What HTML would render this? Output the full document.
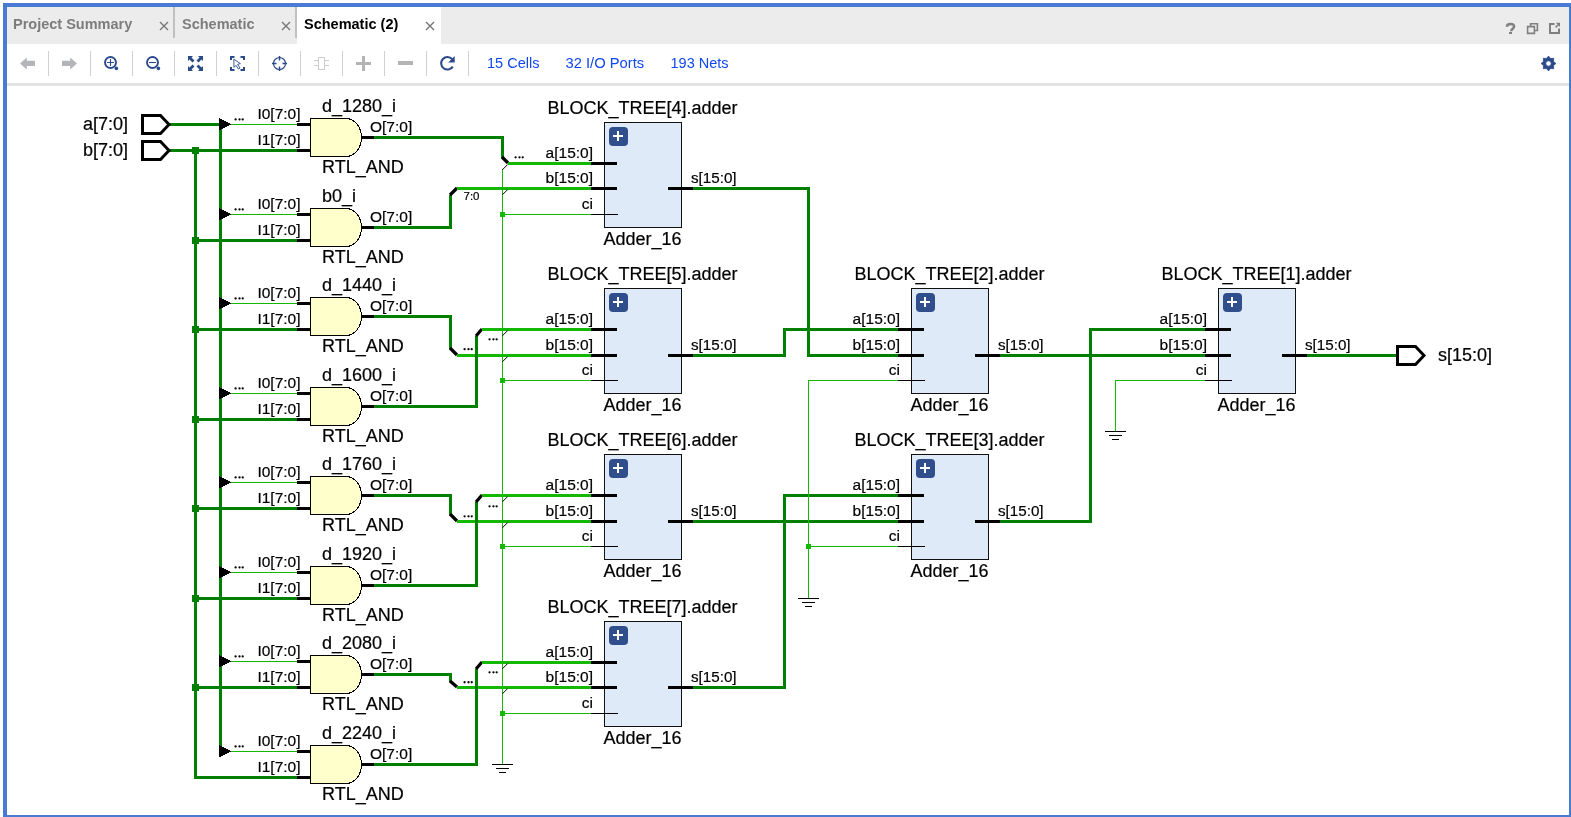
<!DOCTYPE html>
<html><head><meta charset="utf-8"><title>Schematic</title>
<style>
html,body{margin:0;padding:0;background:#fff;}
body{width:1571px;height:817px;overflow:hidden;position:relative;}
svg{position:absolute;left:0;top:0;will-change:transform;}
text{font-family:"Liberation Sans",sans-serif;} .sch text{stroke:#000;stroke-width:0.2px;}
</style></head><body>
<svg width="1571" height="817" viewBox="0 0 1571 817">
<rect x="0" y="0" width="1571" height="817" fill="#fff"/>
<g class="sch" shape-rendering="crispEdges">
<rect x="170" y="123" width="50" height="3" fill="#008000"/>
<rect x="170" y="149" width="128" height="3" fill="#008000"/>
<rect x="219" y="124" width="3" height="628" fill="#008000"/>
<rect x="194" y="150" width="3" height="629" fill="#008000"/>
<rect x="192" y="147" width="7" height="7" fill="#008000"/>
<rect x="231" y="124" width="67" height="1" fill="#14b800"/>
<polygon points="219,118 231.5,124.5 219,130.3" fill="#000"/>
<rect x="297" y="123" width="13" height="3" fill="#000"/>
<rect x="297" y="149" width="13" height="3" fill="#000"/>
<rect x="362" y="136" width="12" height="3" fill="#000"/>
<path d="M310.5,118.5 H346 A15.5,19 0 0 1 346,156.5 H310.5 Z" fill="#ffffcc" stroke="#000" stroke-width="1"/>
<text x="300.5" y="119" font-size="15.5" text-anchor="end" fill="#000" font-weight="normal" >I0[7:0]</text>
<text x="300.5" y="145" font-size="15.5" text-anchor="end" fill="#000" font-weight="normal" >I1[7:0]</text>
<text x="322" y="112" font-size="18" text-anchor="start" fill="#000" font-weight="normal" >d_1280_i</text>
<text x="322" y="173" font-size="18" text-anchor="start" fill="#000" font-weight="normal" >RTL_AND</text>
<text x="370" y="132" font-size="15.5" text-anchor="start" fill="#000" font-weight="normal" >O[7:0]</text>
<rect x="194" y="239" width="104" height="3" fill="#008000"/>
<rect x="192" y="237" width="7" height="7" fill="#008000"/>
<rect x="231" y="214" width="67" height="1" fill="#14b800"/>
<polygon points="219,208 231.5,214.5 219,220.3" fill="#000"/>
<rect x="297" y="213" width="13" height="3" fill="#000"/>
<rect x="297" y="239" width="13" height="3" fill="#000"/>
<rect x="362" y="226" width="12" height="3" fill="#000"/>
<path d="M310.5,208.5 H346 A15.5,19 0 0 1 346,246.5 H310.5 Z" fill="#ffffcc" stroke="#000" stroke-width="1"/>
<text x="300.5" y="209" font-size="15.5" text-anchor="end" fill="#000" font-weight="normal" >I0[7:0]</text>
<text x="300.5" y="235" font-size="15.5" text-anchor="end" fill="#000" font-weight="normal" >I1[7:0]</text>
<text x="322" y="202" font-size="18" text-anchor="start" fill="#000" font-weight="normal" >b0_i</text>
<text x="322" y="263" font-size="18" text-anchor="start" fill="#000" font-weight="normal" >RTL_AND</text>
<text x="370" y="222" font-size="15.5" text-anchor="start" fill="#000" font-weight="normal" >O[7:0]</text>
<rect x="194" y="328" width="104" height="3" fill="#008000"/>
<rect x="192" y="326" width="7" height="7" fill="#008000"/>
<rect x="231" y="303" width="67" height="1" fill="#14b800"/>
<polygon points="219,297 231.5,303.5 219,309.3" fill="#000"/>
<rect x="297" y="302" width="13" height="3" fill="#000"/>
<rect x="297" y="328" width="13" height="3" fill="#000"/>
<rect x="362" y="315" width="12" height="3" fill="#000"/>
<path d="M310.5,297.5 H346 A15.5,19 0 0 1 346,335.5 H310.5 Z" fill="#ffffcc" stroke="#000" stroke-width="1"/>
<text x="300.5" y="298" font-size="15.5" text-anchor="end" fill="#000" font-weight="normal" >I0[7:0]</text>
<text x="300.5" y="324" font-size="15.5" text-anchor="end" fill="#000" font-weight="normal" >I1[7:0]</text>
<text x="322" y="291" font-size="18" text-anchor="start" fill="#000" font-weight="normal" >d_1440_i</text>
<text x="322" y="352" font-size="18" text-anchor="start" fill="#000" font-weight="normal" >RTL_AND</text>
<text x="370" y="311" font-size="15.5" text-anchor="start" fill="#000" font-weight="normal" >O[7:0]</text>
<rect x="194" y="418" width="104" height="3" fill="#008000"/>
<rect x="192" y="416" width="7" height="7" fill="#008000"/>
<rect x="231" y="393" width="67" height="1" fill="#14b800"/>
<polygon points="219,387 231.5,393.5 219,399.3" fill="#000"/>
<rect x="297" y="392" width="13" height="3" fill="#000"/>
<rect x="297" y="418" width="13" height="3" fill="#000"/>
<rect x="362" y="405" width="12" height="3" fill="#000"/>
<path d="M310.5,387.5 H346 A15.5,19 0 0 1 346,425.5 H310.5 Z" fill="#ffffcc" stroke="#000" stroke-width="1"/>
<text x="300.5" y="388" font-size="15.5" text-anchor="end" fill="#000" font-weight="normal" >I0[7:0]</text>
<text x="300.5" y="414" font-size="15.5" text-anchor="end" fill="#000" font-weight="normal" >I1[7:0]</text>
<text x="322" y="381" font-size="18" text-anchor="start" fill="#000" font-weight="normal" >d_1600_i</text>
<text x="322" y="442" font-size="18" text-anchor="start" fill="#000" font-weight="normal" >RTL_AND</text>
<text x="370" y="401" font-size="15.5" text-anchor="start" fill="#000" font-weight="normal" >O[7:0]</text>
<rect x="194" y="507" width="104" height="3" fill="#008000"/>
<rect x="192" y="505" width="7" height="7" fill="#008000"/>
<rect x="231" y="482" width="67" height="1" fill="#14b800"/>
<polygon points="219,476 231.5,482.5 219,488.3" fill="#000"/>
<rect x="297" y="481" width="13" height="3" fill="#000"/>
<rect x="297" y="507" width="13" height="3" fill="#000"/>
<rect x="362" y="494" width="12" height="3" fill="#000"/>
<path d="M310.5,476.5 H346 A15.5,19 0 0 1 346,514.5 H310.5 Z" fill="#ffffcc" stroke="#000" stroke-width="1"/>
<text x="300.5" y="477" font-size="15.5" text-anchor="end" fill="#000" font-weight="normal" >I0[7:0]</text>
<text x="300.5" y="503" font-size="15.5" text-anchor="end" fill="#000" font-weight="normal" >I1[7:0]</text>
<text x="322" y="470" font-size="18" text-anchor="start" fill="#000" font-weight="normal" >d_1760_i</text>
<text x="322" y="531" font-size="18" text-anchor="start" fill="#000" font-weight="normal" >RTL_AND</text>
<text x="370" y="490" font-size="15.5" text-anchor="start" fill="#000" font-weight="normal" >O[7:0]</text>
<rect x="194" y="597" width="104" height="3" fill="#008000"/>
<rect x="192" y="595" width="7" height="7" fill="#008000"/>
<rect x="231" y="572" width="67" height="1" fill="#14b800"/>
<polygon points="219,566 231.5,572.5 219,578.3" fill="#000"/>
<rect x="297" y="571" width="13" height="3" fill="#000"/>
<rect x="297" y="597" width="13" height="3" fill="#000"/>
<rect x="362" y="584" width="12" height="3" fill="#000"/>
<path d="M310.5,566.5 H346 A15.5,19 0 0 1 346,604.5 H310.5 Z" fill="#ffffcc" stroke="#000" stroke-width="1"/>
<text x="300.5" y="567" font-size="15.5" text-anchor="end" fill="#000" font-weight="normal" >I0[7:0]</text>
<text x="300.5" y="593" font-size="15.5" text-anchor="end" fill="#000" font-weight="normal" >I1[7:0]</text>
<text x="322" y="560" font-size="18" text-anchor="start" fill="#000" font-weight="normal" >d_1920_i</text>
<text x="322" y="621" font-size="18" text-anchor="start" fill="#000" font-weight="normal" >RTL_AND</text>
<text x="370" y="580" font-size="15.5" text-anchor="start" fill="#000" font-weight="normal" >O[7:0]</text>
<rect x="194" y="686" width="104" height="3" fill="#008000"/>
<rect x="192" y="684" width="7" height="7" fill="#008000"/>
<rect x="231" y="661" width="67" height="1" fill="#14b800"/>
<polygon points="219,655 231.5,661.5 219,667.3" fill="#000"/>
<rect x="297" y="660" width="13" height="3" fill="#000"/>
<rect x="297" y="686" width="13" height="3" fill="#000"/>
<rect x="362" y="673" width="12" height="3" fill="#000"/>
<path d="M310.5,655.5 H346 A15.5,19 0 0 1 346,693.5 H310.5 Z" fill="#ffffcc" stroke="#000" stroke-width="1"/>
<text x="300.5" y="656" font-size="15.5" text-anchor="end" fill="#000" font-weight="normal" >I0[7:0]</text>
<text x="300.5" y="682" font-size="15.5" text-anchor="end" fill="#000" font-weight="normal" >I1[7:0]</text>
<text x="322" y="649" font-size="18" text-anchor="start" fill="#000" font-weight="normal" >d_2080_i</text>
<text x="322" y="710" font-size="18" text-anchor="start" fill="#000" font-weight="normal" >RTL_AND</text>
<text x="370" y="669" font-size="15.5" text-anchor="start" fill="#000" font-weight="normal" >O[7:0]</text>
<rect x="194" y="776" width="104" height="3" fill="#008000"/>
<rect x="231" y="751" width="67" height="1" fill="#14b800"/>
<polygon points="219,745 231.5,751.5 219,757.3" fill="#000"/>
<rect x="297" y="750" width="13" height="3" fill="#000"/>
<rect x="297" y="776" width="13" height="3" fill="#000"/>
<rect x="362" y="763" width="12" height="3" fill="#000"/>
<path d="M310.5,745.5 H346 A15.5,19 0 0 1 346,783.5 H310.5 Z" fill="#ffffcc" stroke="#000" stroke-width="1"/>
<text x="300.5" y="746" font-size="15.5" text-anchor="end" fill="#000" font-weight="normal" >I0[7:0]</text>
<text x="300.5" y="772" font-size="15.5" text-anchor="end" fill="#000" font-weight="normal" >I1[7:0]</text>
<text x="322" y="739" font-size="18" text-anchor="start" fill="#000" font-weight="normal" >d_2240_i</text>
<text x="322" y="800" font-size="18" text-anchor="start" fill="#000" font-weight="normal" >RTL_AND</text>
<text x="370" y="759" font-size="15.5" text-anchor="start" fill="#000" font-weight="normal" >O[7:0]</text>
<polygon points="142.5,115.5 160.5,115.5 169,124.5 160.5,133.5 142.5,133.5" fill="#fff" stroke="#000" stroke-width="3" stroke-linejoin="miter" shape-rendering="geometricPrecision"/>
<polygon points="142.5,141.5 160.5,141.5 169,150.5 160.5,159.5 142.5,159.5" fill="#fff" stroke="#000" stroke-width="3" stroke-linejoin="miter" shape-rendering="geometricPrecision"/>
<text x="128" y="130" font-size="18" text-anchor="end" fill="#000" font-weight="normal" >a[7:0]</text>
<text x="128" y="156" font-size="18" text-anchor="end" fill="#000" font-weight="normal" >b[7:0]</text>
<rect x="374" y="136" width="130" height="3" fill="#008000"/>
<rect x="501" y="136" width="3" height="22" fill="#008000"/>
<line x1="502" y1="157" x2="508" y2="163" stroke="#000" stroke-width="3.2" stroke-linecap="butt" shape-rendering="geometricPrecision"/>
<rect x="508" y="162" width="84" height="3" fill="#14b800"/>
<rect x="374" y="226" width="78" height="3" fill="#008000"/>
<rect x="449" y="195" width="3" height="34" fill="#008000"/>
<line x1="450" y1="195" x2="457" y2="188" stroke="#000" stroke-width="3.2" stroke-linecap="butt" shape-rendering="geometricPrecision"/>
<rect x="457" y="187" width="135" height="3" fill="#14b800"/>
<rect x="374" y="315" width="78" height="3" fill="#008000"/>
<rect x="449" y="315" width="3" height="34" fill="#008000"/>
<line x1="450" y1="348" x2="457" y2="355" stroke="#000" stroke-width="3.2" stroke-linecap="butt" shape-rendering="geometricPrecision"/>
<rect x="457" y="354" width="135" height="3" fill="#14b800"/>
<rect x="374" y="405" width="104" height="3" fill="#008000"/>
<rect x="475" y="336" width="3" height="72" fill="#008000"/>
<line x1="476" y1="336" x2="482" y2="329" stroke="#000" stroke-width="3.2" stroke-linecap="butt" shape-rendering="geometricPrecision"/>
<rect x="482" y="328" width="110" height="3" fill="#14b800"/>
<rect x="374" y="494" width="78" height="3" fill="#008000"/>
<rect x="449" y="494" width="3" height="21" fill="#008000"/>
<line x1="450" y1="514" x2="457" y2="521" stroke="#000" stroke-width="3.2" stroke-linecap="butt" shape-rendering="geometricPrecision"/>
<rect x="457" y="520" width="135" height="3" fill="#14b800"/>
<rect x="374" y="584" width="104" height="3" fill="#008000"/>
<rect x="475" y="502" width="3" height="85" fill="#008000"/>
<line x1="476" y1="502" x2="482" y2="495" stroke="#000" stroke-width="3.2" stroke-linecap="butt" shape-rendering="geometricPrecision"/>
<rect x="482" y="494" width="110" height="3" fill="#14b800"/>
<rect x="374" y="673" width="78" height="3" fill="#008000"/>
<rect x="449" y="673" width="3" height="9" fill="#008000"/>
<line x1="450" y1="681" x2="457" y2="687" stroke="#000" stroke-width="3.2" stroke-linecap="butt" shape-rendering="geometricPrecision"/>
<rect x="457" y="686" width="135" height="3" fill="#14b800"/>
<rect x="374" y="763" width="104" height="3" fill="#008000"/>
<rect x="475" y="669" width="3" height="97" fill="#008000"/>
<line x1="476" y1="669" x2="482" y2="662" stroke="#000" stroke-width="3.2" stroke-linecap="butt" shape-rendering="geometricPrecision"/>
<rect x="482" y="661" width="110" height="3" fill="#14b800"/>
<text x="463.5" y="199.5" font-size="11.5" text-anchor="start" fill="#000" font-weight="normal" >7:0</text>
<circle cx="235.6" cy="119.4" r="1.15" fill="#000" shape-rendering="geometricPrecision"/>
<circle cx="239.5" cy="119.4" r="1.15" fill="#000" shape-rendering="geometricPrecision"/>
<circle cx="242.7" cy="119.4" r="1.15" fill="#000" shape-rendering="geometricPrecision"/>
<circle cx="235.6" cy="209.4" r="1.15" fill="#000" shape-rendering="geometricPrecision"/>
<circle cx="239.5" cy="209.4" r="1.15" fill="#000" shape-rendering="geometricPrecision"/>
<circle cx="242.7" cy="209.4" r="1.15" fill="#000" shape-rendering="geometricPrecision"/>
<circle cx="235.6" cy="298.4" r="1.15" fill="#000" shape-rendering="geometricPrecision"/>
<circle cx="239.5" cy="298.4" r="1.15" fill="#000" shape-rendering="geometricPrecision"/>
<circle cx="242.7" cy="298.4" r="1.15" fill="#000" shape-rendering="geometricPrecision"/>
<circle cx="235.6" cy="388.4" r="1.15" fill="#000" shape-rendering="geometricPrecision"/>
<circle cx="239.5" cy="388.4" r="1.15" fill="#000" shape-rendering="geometricPrecision"/>
<circle cx="242.7" cy="388.4" r="1.15" fill="#000" shape-rendering="geometricPrecision"/>
<circle cx="235.6" cy="477.4" r="1.15" fill="#000" shape-rendering="geometricPrecision"/>
<circle cx="239.5" cy="477.4" r="1.15" fill="#000" shape-rendering="geometricPrecision"/>
<circle cx="242.7" cy="477.4" r="1.15" fill="#000" shape-rendering="geometricPrecision"/>
<circle cx="235.6" cy="567.4" r="1.15" fill="#000" shape-rendering="geometricPrecision"/>
<circle cx="239.5" cy="567.4" r="1.15" fill="#000" shape-rendering="geometricPrecision"/>
<circle cx="242.7" cy="567.4" r="1.15" fill="#000" shape-rendering="geometricPrecision"/>
<circle cx="235.6" cy="656.4" r="1.15" fill="#000" shape-rendering="geometricPrecision"/>
<circle cx="239.5" cy="656.4" r="1.15" fill="#000" shape-rendering="geometricPrecision"/>
<circle cx="242.7" cy="656.4" r="1.15" fill="#000" shape-rendering="geometricPrecision"/>
<circle cx="235.6" cy="746.4" r="1.15" fill="#000" shape-rendering="geometricPrecision"/>
<circle cx="239.5" cy="746.4" r="1.15" fill="#000" shape-rendering="geometricPrecision"/>
<circle cx="242.7" cy="746.4" r="1.15" fill="#000" shape-rendering="geometricPrecision"/>
<circle cx="515.6" cy="157.3" r="1.15" fill="#000" shape-rendering="geometricPrecision"/>
<circle cx="519.5" cy="157.3" r="1.15" fill="#000" shape-rendering="geometricPrecision"/>
<circle cx="522.7" cy="157.3" r="1.15" fill="#000" shape-rendering="geometricPrecision"/>
<circle cx="489.55" cy="339.3" r="1.15" fill="#000" shape-rendering="geometricPrecision"/>
<circle cx="493.45" cy="339.3" r="1.15" fill="#000" shape-rendering="geometricPrecision"/>
<circle cx="496.65000000000003" cy="339.3" r="1.15" fill="#000" shape-rendering="geometricPrecision"/>
<circle cx="464.6" cy="349.2" r="1.15" fill="#000" shape-rendering="geometricPrecision"/>
<circle cx="468.5" cy="349.2" r="1.15" fill="#000" shape-rendering="geometricPrecision"/>
<circle cx="471.70000000000005" cy="349.2" r="1.15" fill="#000" shape-rendering="geometricPrecision"/>
<circle cx="489.55" cy="506.3" r="1.15" fill="#000" shape-rendering="geometricPrecision"/>
<circle cx="493.45" cy="506.3" r="1.15" fill="#000" shape-rendering="geometricPrecision"/>
<circle cx="496.65000000000003" cy="506.3" r="1.15" fill="#000" shape-rendering="geometricPrecision"/>
<circle cx="464.6" cy="516.3" r="1.15" fill="#000" shape-rendering="geometricPrecision"/>
<circle cx="468.5" cy="516.3" r="1.15" fill="#000" shape-rendering="geometricPrecision"/>
<circle cx="471.70000000000005" cy="516.3" r="1.15" fill="#000" shape-rendering="geometricPrecision"/>
<circle cx="489.55" cy="672.3" r="1.15" fill="#000" shape-rendering="geometricPrecision"/>
<circle cx="493.45" cy="672.3" r="1.15" fill="#000" shape-rendering="geometricPrecision"/>
<circle cx="496.65000000000003" cy="672.3" r="1.15" fill="#000" shape-rendering="geometricPrecision"/>
<circle cx="464.6" cy="682.25" r="1.15" fill="#000" shape-rendering="geometricPrecision"/>
<circle cx="468.5" cy="682.25" r="1.15" fill="#000" shape-rendering="geometricPrecision"/>
<circle cx="471.70000000000005" cy="682.25" r="1.15" fill="#000" shape-rendering="geometricPrecision"/>
<rect x="502" y="169" width="1" height="596" fill="#14b800"/>
<rect x="500" y="212" width="5" height="5" fill="#14b800"/>
<rect x="502" y="214" width="90" height="1" fill="#14b800"/>
<rect x="500" y="378" width="5" height="5" fill="#14b800"/>
<rect x="502" y="380" width="90" height="1" fill="#14b800"/>
<rect x="500" y="544" width="5" height="5" fill="#14b800"/>
<rect x="502" y="546" width="90" height="1" fill="#14b800"/>
<rect x="500" y="711" width="5" height="5" fill="#14b800"/>
<rect x="502" y="713" width="90" height="1" fill="#14b800"/>
<line x1="502.3" y1="169.9" x2="507.6" y2="164.6" stroke="#000" stroke-width="1" stroke-linecap="butt" shape-rendering="geometricPrecision"/>
<line x1="502.3" y1="194.9" x2="507.6" y2="189.6" stroke="#000" stroke-width="1" stroke-linecap="butt" shape-rendering="geometricPrecision"/>
<line x1="502.3" y1="335.9" x2="507.6" y2="330.6" stroke="#000" stroke-width="1" stroke-linecap="butt" shape-rendering="geometricPrecision"/>
<line x1="502.3" y1="361.9" x2="507.6" y2="356.6" stroke="#000" stroke-width="1" stroke-linecap="butt" shape-rendering="geometricPrecision"/>
<line x1="502.3" y1="501.9" x2="507.6" y2="496.6" stroke="#000" stroke-width="1" stroke-linecap="butt" shape-rendering="geometricPrecision"/>
<line x1="502.3" y1="527.9" x2="507.6" y2="522.6" stroke="#000" stroke-width="1" stroke-linecap="butt" shape-rendering="geometricPrecision"/>
<line x1="502.3" y1="668.9" x2="507.6" y2="663.6" stroke="#000" stroke-width="1" stroke-linecap="butt" shape-rendering="geometricPrecision"/>
<line x1="502.3" y1="693.9" x2="507.6" y2="688.6" stroke="#000" stroke-width="1" stroke-linecap="butt" shape-rendering="geometricPrecision"/>
<rect x="492" y="764" width="21" height="1" fill="#000"/>
<rect x="496" y="768" width="13" height="1" fill="#000"/>
<rect x="499" y="772" width="7" height="1" fill="#000"/>
<rect x="693" y="187" width="117" height="3" fill="#008000"/>
<rect x="807" y="187" width="3" height="170" fill="#008000"/>
<rect x="807" y="354" width="92" height="3" fill="#008000"/>
<rect x="693" y="354" width="93" height="3" fill="#008000"/>
<rect x="783" y="328" width="3" height="29" fill="#008000"/>
<rect x="783" y="328" width="116" height="3" fill="#008000"/>
<rect x="693" y="520" width="206" height="3" fill="#008000"/>
<rect x="693" y="686" width="93" height="3" fill="#008000"/>
<rect x="783" y="494" width="3" height="195" fill="#008000"/>
<rect x="783" y="494" width="116" height="3" fill="#008000"/>
<rect x="808" y="380" width="91" height="1" fill="#14b800"/>
<rect x="808" y="380" width="1" height="219" fill="#14b800"/>
<rect x="806" y="544" width="5" height="5" fill="#14b800"/>
<rect x="808" y="546" width="91" height="1" fill="#14b800"/>
<rect x="798" y="598" width="21" height="1" fill="#000"/>
<rect x="802" y="602" width="13" height="1" fill="#000"/>
<rect x="805" y="606" width="7" height="1" fill="#000"/>
<rect x="1000" y="354" width="206" height="3" fill="#008000"/>
<rect x="1000" y="520" width="92" height="3" fill="#008000"/>
<rect x="1089" y="328" width="3" height="195" fill="#008000"/>
<rect x="1089" y="328" width="117" height="3" fill="#008000"/>
<rect x="1115" y="380" width="91" height="1" fill="#14b800"/>
<rect x="1115" y="380" width="1" height="52" fill="#14b800"/>
<rect x="1105" y="431" width="21" height="1" fill="#000"/>
<rect x="1109" y="435" width="13" height="1" fill="#000"/>
<rect x="1112" y="439" width="7" height="1" fill="#000"/>
<rect x="1307" y="354" width="90" height="3" fill="#008000"/>
<polygon points="1397.5,346.5 1415.5,346.5 1424,355.5 1415.5,364.5 1397.5,364.5" fill="#fff" stroke="#000" stroke-width="3" stroke-linejoin="miter" shape-rendering="geometricPrecision"/>
<text x="1438" y="361" font-size="18" text-anchor="start" fill="#000" font-weight="normal" >s[15:0]</text>
<rect x="604.5" y="122.5" width="77" height="105" fill="#dfeaf8" stroke="#111" stroke-width="1"/>
<rect x="609" y="127" width="19" height="19" rx="4" fill="#304e8c" shape-rendering="geometricPrecision"/>
<rect x="613" y="135" width="10" height="2" fill="#fff"/>
<rect x="617" y="131" width="2" height="10" fill="#fff"/>
<rect x="591" y="162" width="26" height="3" fill="#000"/>
<rect x="591" y="187" width="26" height="3" fill="#000"/>
<rect x="591" y="214" width="27" height="1" fill="#000"/>
<rect x="668" y="187" width="25" height="3" fill="#000"/>
<text x="642.5" y="114" font-size="18" text-anchor="middle" fill="#000" font-weight="normal" >BLOCK_TREE[4].adder</text>
<text x="642.5" y="245" font-size="18" text-anchor="middle" fill="#000" font-weight="normal" >Adder_16</text>
<text x="593" y="158" font-size="15.5" text-anchor="end" fill="#000" font-weight="normal" >a[15:0]</text>
<text x="593" y="183" font-size="15.5" text-anchor="end" fill="#000" font-weight="normal" >b[15:0]</text>
<text x="593" y="209" font-size="15.5" text-anchor="end" fill="#000" font-weight="normal" >ci</text>
<text x="691" y="183" font-size="15.2" text-anchor="start" fill="#000" font-weight="normal" >s[15:0]</text>
<rect x="604.5" y="288.5" width="77" height="105" fill="#dfeaf8" stroke="#111" stroke-width="1"/>
<rect x="609" y="293" width="19" height="19" rx="4" fill="#304e8c" shape-rendering="geometricPrecision"/>
<rect x="613" y="301" width="10" height="2" fill="#fff"/>
<rect x="617" y="297" width="2" height="10" fill="#fff"/>
<rect x="591" y="328" width="26" height="3" fill="#000"/>
<rect x="591" y="354" width="26" height="3" fill="#000"/>
<rect x="591" y="380" width="27" height="1" fill="#000"/>
<rect x="668" y="354" width="25" height="3" fill="#000"/>
<text x="642.5" y="280" font-size="18" text-anchor="middle" fill="#000" font-weight="normal" >BLOCK_TREE[5].adder</text>
<text x="642.5" y="411" font-size="18" text-anchor="middle" fill="#000" font-weight="normal" >Adder_16</text>
<text x="593" y="324" font-size="15.5" text-anchor="end" fill="#000" font-weight="normal" >a[15:0]</text>
<text x="593" y="350" font-size="15.5" text-anchor="end" fill="#000" font-weight="normal" >b[15:0]</text>
<text x="593" y="375" font-size="15.5" text-anchor="end" fill="#000" font-weight="normal" >ci</text>
<text x="691" y="350" font-size="15.2" text-anchor="start" fill="#000" font-weight="normal" >s[15:0]</text>
<rect x="604.5" y="454.5" width="77" height="105" fill="#dfeaf8" stroke="#111" stroke-width="1"/>
<rect x="609" y="459" width="19" height="19" rx="4" fill="#304e8c" shape-rendering="geometricPrecision"/>
<rect x="613" y="467" width="10" height="2" fill="#fff"/>
<rect x="617" y="463" width="2" height="10" fill="#fff"/>
<rect x="591" y="494" width="26" height="3" fill="#000"/>
<rect x="591" y="520" width="26" height="3" fill="#000"/>
<rect x="591" y="546" width="27" height="1" fill="#000"/>
<rect x="668" y="520" width="25" height="3" fill="#000"/>
<text x="642.5" y="446" font-size="18" text-anchor="middle" fill="#000" font-weight="normal" >BLOCK_TREE[6].adder</text>
<text x="642.5" y="577" font-size="18" text-anchor="middle" fill="#000" font-weight="normal" >Adder_16</text>
<text x="593" y="490" font-size="15.5" text-anchor="end" fill="#000" font-weight="normal" >a[15:0]</text>
<text x="593" y="516" font-size="15.5" text-anchor="end" fill="#000" font-weight="normal" >b[15:0]</text>
<text x="593" y="541" font-size="15.5" text-anchor="end" fill="#000" font-weight="normal" >ci</text>
<text x="691" y="516" font-size="15.2" text-anchor="start" fill="#000" font-weight="normal" >s[15:0]</text>
<rect x="604.5" y="621.5" width="77" height="105" fill="#dfeaf8" stroke="#111" stroke-width="1"/>
<rect x="609" y="626" width="19" height="19" rx="4" fill="#304e8c" shape-rendering="geometricPrecision"/>
<rect x="613" y="634" width="10" height="2" fill="#fff"/>
<rect x="617" y="630" width="2" height="10" fill="#fff"/>
<rect x="591" y="661" width="26" height="3" fill="#000"/>
<rect x="591" y="686" width="26" height="3" fill="#000"/>
<rect x="591" y="713" width="27" height="1" fill="#000"/>
<rect x="668" y="686" width="25" height="3" fill="#000"/>
<text x="642.5" y="613" font-size="18" text-anchor="middle" fill="#000" font-weight="normal" >BLOCK_TREE[7].adder</text>
<text x="642.5" y="744" font-size="18" text-anchor="middle" fill="#000" font-weight="normal" >Adder_16</text>
<text x="593" y="657" font-size="15.5" text-anchor="end" fill="#000" font-weight="normal" >a[15:0]</text>
<text x="593" y="682" font-size="15.5" text-anchor="end" fill="#000" font-weight="normal" >b[15:0]</text>
<text x="593" y="708" font-size="15.5" text-anchor="end" fill="#000" font-weight="normal" >ci</text>
<text x="691" y="682" font-size="15.2" text-anchor="start" fill="#000" font-weight="normal" >s[15:0]</text>
<rect x="911.5" y="288.5" width="77" height="105" fill="#dfeaf8" stroke="#111" stroke-width="1"/>
<rect x="916" y="293" width="19" height="19" rx="4" fill="#304e8c" shape-rendering="geometricPrecision"/>
<rect x="920" y="301" width="10" height="2" fill="#fff"/>
<rect x="924" y="297" width="2" height="10" fill="#fff"/>
<rect x="898" y="328" width="26" height="3" fill="#000"/>
<rect x="898" y="354" width="26" height="3" fill="#000"/>
<rect x="898" y="380" width="27" height="1" fill="#000"/>
<rect x="975" y="354" width="25" height="3" fill="#000"/>
<text x="949.5" y="280" font-size="18" text-anchor="middle" fill="#000" font-weight="normal" >BLOCK_TREE[2].adder</text>
<text x="949.5" y="411" font-size="18" text-anchor="middle" fill="#000" font-weight="normal" >Adder_16</text>
<text x="900" y="324" font-size="15.5" text-anchor="end" fill="#000" font-weight="normal" >a[15:0]</text>
<text x="900" y="350" font-size="15.5" text-anchor="end" fill="#000" font-weight="normal" >b[15:0]</text>
<text x="900" y="375" font-size="15.5" text-anchor="end" fill="#000" font-weight="normal" >ci</text>
<text x="998" y="350" font-size="15.2" text-anchor="start" fill="#000" font-weight="normal" >s[15:0]</text>
<rect x="911.5" y="454.5" width="77" height="105" fill="#dfeaf8" stroke="#111" stroke-width="1"/>
<rect x="916" y="459" width="19" height="19" rx="4" fill="#304e8c" shape-rendering="geometricPrecision"/>
<rect x="920" y="467" width="10" height="2" fill="#fff"/>
<rect x="924" y="463" width="2" height="10" fill="#fff"/>
<rect x="898" y="494" width="26" height="3" fill="#000"/>
<rect x="898" y="520" width="26" height="3" fill="#000"/>
<rect x="898" y="546" width="27" height="1" fill="#000"/>
<rect x="975" y="520" width="25" height="3" fill="#000"/>
<text x="949.5" y="446" font-size="18" text-anchor="middle" fill="#000" font-weight="normal" >BLOCK_TREE[3].adder</text>
<text x="949.5" y="577" font-size="18" text-anchor="middle" fill="#000" font-weight="normal" >Adder_16</text>
<text x="900" y="490" font-size="15.5" text-anchor="end" fill="#000" font-weight="normal" >a[15:0]</text>
<text x="900" y="516" font-size="15.5" text-anchor="end" fill="#000" font-weight="normal" >b[15:0]</text>
<text x="900" y="541" font-size="15.5" text-anchor="end" fill="#000" font-weight="normal" >ci</text>
<text x="998" y="516" font-size="15.2" text-anchor="start" fill="#000" font-weight="normal" >s[15:0]</text>
<rect x="1218.5" y="288.5" width="77" height="105" fill="#dfeaf8" stroke="#111" stroke-width="1"/>
<rect x="1223" y="293" width="19" height="19" rx="4" fill="#304e8c" shape-rendering="geometricPrecision"/>
<rect x="1227" y="301" width="10" height="2" fill="#fff"/>
<rect x="1231" y="297" width="2" height="10" fill="#fff"/>
<rect x="1205" y="328" width="26" height="3" fill="#000"/>
<rect x="1205" y="354" width="26" height="3" fill="#000"/>
<rect x="1205" y="380" width="27" height="1" fill="#000"/>
<rect x="1282" y="354" width="25" height="3" fill="#000"/>
<text x="1256.5" y="280" font-size="18" text-anchor="middle" fill="#000" font-weight="normal" >BLOCK_TREE[1].adder</text>
<text x="1256.5" y="411" font-size="18" text-anchor="middle" fill="#000" font-weight="normal" >Adder_16</text>
<text x="1207" y="324" font-size="15.5" text-anchor="end" fill="#000" font-weight="normal" >a[15:0]</text>
<text x="1207" y="350" font-size="15.5" text-anchor="end" fill="#000" font-weight="normal" >b[15:0]</text>
<text x="1207" y="375" font-size="15.5" text-anchor="end" fill="#000" font-weight="normal" >ci</text>
<text x="1305" y="350" font-size="15.2" text-anchor="start" fill="#000" font-weight="normal" >s[15:0]</text>
</g>
<rect x="7" y="7" width="1562" height="37" fill="#ececec"/>
<rect x="297" y="7" width="144" height="37" fill="#ffffff"/>
<rect x="173" y="7" width="2" height="31" fill="#c0c0c0"/>
<rect x="295" y="7" width="2" height="31" fill="#c0c0c0"/>
<text x="13" y="29" font-size="14.5" text-anchor="start" fill="#7d7d7d" font-weight="bold" >Project Summary</text>
<text x="182" y="29" font-size="14.5" text-anchor="start" fill="#7d7d7d" font-weight="bold" >Schematic</text>
<text x="304" y="29" font-size="14.5" text-anchor="start" fill="#000" font-weight="bold" >Schematic (2)</text>
<path d="M160,22 l8,8 M168,22 l-8,8" stroke="#777" stroke-width="1.4"/>
<path d="M282,22 l8,8 M290,22 l-8,8" stroke="#777" stroke-width="1.4"/>
<path d="M426,22 l8,8 M434,22 l-8,8" stroke="#777" stroke-width="1.4"/>
<path d="M1506.9,26.8 C1506.9,24.6 1508.3,23.9 1510.5,23.9 C1512.9,23.9 1514.1,25 1514.1,26.6 C1514.1,28.6 1511.2,29 1511.2,31.2" fill="none" stroke="#808080" stroke-width="2.5"/><rect x="1509" y="32" width="3" height="2" fill="#808080"/>
<path d="M1527.6,26.6 h6.8 v6.8 h-6.8 z M1530.6,26.6 v-2.9 h6.8 v6.8 h-3" fill="none" stroke="#808080" stroke-width="1.6"/>
<path d="M1554.6,24 h-4.6 v9 h9 v-4.6" fill="none" stroke="#808080" stroke-width="2"/><path d="M1555.6,27.4 l2.6,-2.6" stroke="#808080" stroke-width="1.6"/><path d="M1560,22.8 v4.2 l-4.2,-4.2z" fill="#808080"/>
<rect x="7" y="83" width="1562" height="3" fill="#e3e3e3"/>
<rect x="48" y="51" width="1" height="25" fill="#d0d0d0"/>
<rect x="90" y="51" width="1" height="25" fill="#d0d0d0"/>
<rect x="132" y="51" width="1" height="25" fill="#d0d0d0"/>
<rect x="174" y="51" width="1" height="25" fill="#d0d0d0"/>
<rect x="216" y="51" width="1" height="25" fill="#d0d0d0"/>
<rect x="258" y="51" width="1" height="25" fill="#d0d0d0"/>
<rect x="300" y="51" width="1" height="25" fill="#d0d0d0"/>
<rect x="342" y="51" width="1" height="25" fill="#d0d0d0"/>
<rect x="384" y="51" width="1" height="25" fill="#d0d0d0"/>
<rect x="426" y="51" width="1" height="25" fill="#d0d0d0"/>
<rect x="468" y="51" width="1" height="25" fill="#d0d0d0"/>
<path d="M20,63.5 L26.8,57.6 V60.8 H35 V66 H26.8 V69.4 Z" fill="#b4b5b8"/>
<path d="M77,63.5 L70.2,57.6 V60.8 H62 V66 H70.2 V69.4 Z" fill="#b4b5b8"/>
<circle cx="110.5" cy="62.5" r="5.5" fill="none" stroke="#2b4a8a" stroke-width="1.9"/><path d="M107,62.5 h7 M110.5,59 v7" stroke="#2b4a8a" stroke-width="1.1"/><circle cx="116.4" cy="68.4" r="1.8" fill="#2b4a8a"/>
<circle cx="152.5" cy="62.5" r="5.5" fill="none" stroke="#2b4a8a" stroke-width="1.9"/><path d="M149,62.5 h7" stroke="#2b4a8a" stroke-width="1.1"/><circle cx="158.4" cy="68.4" r="1.8" fill="#2b4a8a"/>
<g fill="#2b4a8a"><path d="M188,56 h5 l-1.5,1.5 3,3 -2,2 -3,-3 -1.5,1.5z"/><path d="M203,56 v5 l-1.5,-1.5 -3,3 -2,-2 3,-3 -1.5,-1.5z"/><path d="M188,71 v-5 l1.5,1.5 3,-3 2,2 -3,3 1.5,1.5z"/><path d="M203,71 h-5 l1.5,-1.5 -3,-3 2,-2 3,3 1.5,-1.5z"/></g>
<path d="M231,60 v-3 h3.5 M240.5,57 h3.5 v3 M244,67 v3 h-3.5 M234.5,70 h-3.5 v-3" fill="none" stroke="#2b4a8a" stroke-width="2"/><path d="M233.8,59.2 l6.6,4.4 -2.8,0.8 2.4,3.6 -1.6,1 -2.4,-3.6 -2,2z" fill="#fff" stroke="#2b4a8a" stroke-width="0.9"/>
<circle cx="279.5" cy="63.5" r="6" fill="none" stroke="#2b4a8a" stroke-width="1.2"/><path d="M279.5,56 v4.5 M279.5,66.5 v4.5 M272,63.5 h4.5 M282.5,63.5 h4.5" stroke="#2b4a8a" stroke-width="1.5"/>
<rect x="318.5" y="57.5" width="6" height="12" fill="none" stroke="#cccccc" stroke-width="1"/><path d="M314,60.5 h4 M314,65.5 h4 M325,60.5 h4 M325,65.5 h4" stroke="#cccccc" stroke-width="1.2"/>
<rect x="356" y="62" width="15" height="3" fill="#b4b4b4"/>
<rect x="362" y="56" width="3" height="15" fill="#b4b4b4"/>
<rect x="398" y="61" width="15" height="4" fill="#b4b4b4"/>
<g transform="translate(-0.8,-0.4)"><path d="M453,59.5 A6.3,6.3 0 1 0 453.6,67" fill="none" stroke="#2b4a8a" stroke-width="2.1"/><path d="M455.5,56.5 v6.5 h-6.5z" fill="#2b4a8a"/></g>
<text x="487" y="68" font-size="14.5" text-anchor="start" fill="#1048f0" font-weight="normal" >15 Cells</text>
<text x="565.5" y="68" font-size="14.75" text-anchor="start" fill="#1048f0" font-weight="normal" >32 I/O Ports</text>
<text x="670.5" y="68" font-size="14.5" text-anchor="start" fill="#1048f0" font-weight="normal" >193 Nets</text>
<path d="M1548.50,56.10 L1550.57,58.51 L1553.73,58.27 L1553.49,61.43 L1555.90,63.50 L1553.49,65.57 L1553.73,68.73 L1550.57,68.49 L1548.50,70.90 L1546.43,68.49 L1543.27,68.73 L1543.51,65.57 L1541.10,63.50 L1543.51,61.43 L1543.27,58.27 L1546.43,58.51 Z M1551.2,63.5 A2.7,2.7 0 1 0 1545.8,63.5 A2.7,2.7 0 1 0 1551.2,63.5 Z" fill="#2b4a8a" fill-rule="evenodd" stroke="#2b4a8a" stroke-width="0.8" stroke-linejoin="round"/>
<rect x="5" y="5" width="1566" height="812" fill="none" stroke="#487bd1" stroke-width="4"/>
</svg>
</body></html>
